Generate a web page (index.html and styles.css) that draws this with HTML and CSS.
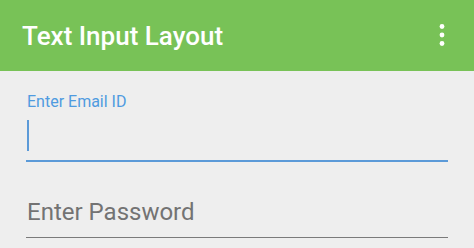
FILE: index.html
```html
<!DOCTYPE html>
<html lang="en">
<head>
    <meta charset="UTF-8">
    <meta name="viewport" content="width=device-width, initial-scale=1.0">
    <title>Text Input Layout</title>
    <link rel="stylesheet" href="styles.css">
</head>
<body>
    <div class="toolbar">
        <h1 class="title">Text Input Layout</h1>
        <svg class="overflow" width="10" height="26" viewBox="0 0 10 26">
            <circle cx="5" cy="4.5" r="2.4" fill="#fff"/>
            <circle cx="5" cy="13" r="2.4" fill="#fff"/>
            <circle cx="5" cy="21.5" r="2.4" fill="#fff"/>
        </svg>
    </div>

    <div class="form">
        <div class="field focused">
            <div class="label">Enter Email ID</div>
            <div class="input"><span class="caret"></span></div>
        </div>
        <div class="field">
            <div class="input placeholder">Enter Password</div>
        </div>
    </div>
</body>
</html>
```

FILE: styles.css
```css
body {
    margin: 0;
    width: 474px;
    height: 248px;
    overflow: hidden;
    background-color: #eeeeee;
    font-family: Roboto, "Noto Sans", sans-serif;
}

.toolbar {
    height: 71px;
    background-color: #78c257;
    display: flex;
    align-items: center;
    justify-content: space-between;
    padding: 0 27px 0 22px;
}

.title {
    margin: 0;
    color: #ffffff;
    font-size: 26px;
    font-weight: 500;
    line-height: 30px;
}

.overflow {
    display: block;
    margin-top: -1px;
}

.form {
    padding: 22px 26px 0 26px;
}

.label {
    color: #4f9be0;
    font-size: 16px;
    line-height: 18px;
    padding-left: 1px;
}

.field .input {
    border-bottom: 1px solid #7a7a7a;
}

.field.focused .input {
    height: 40px;
    padding-top: 9px;
    border-bottom: 2px solid #5b9ad8;
}

.caret {
    display: block;
    width: 2px;
    height: 31px;
    margin-left: 1px;
    background-color: #5b9ad8;
}

.placeholder {
    color: #737373;
    font-size: 24px;
    line-height: 28px;
    padding: 36px 0 11px 1px;
}
```
